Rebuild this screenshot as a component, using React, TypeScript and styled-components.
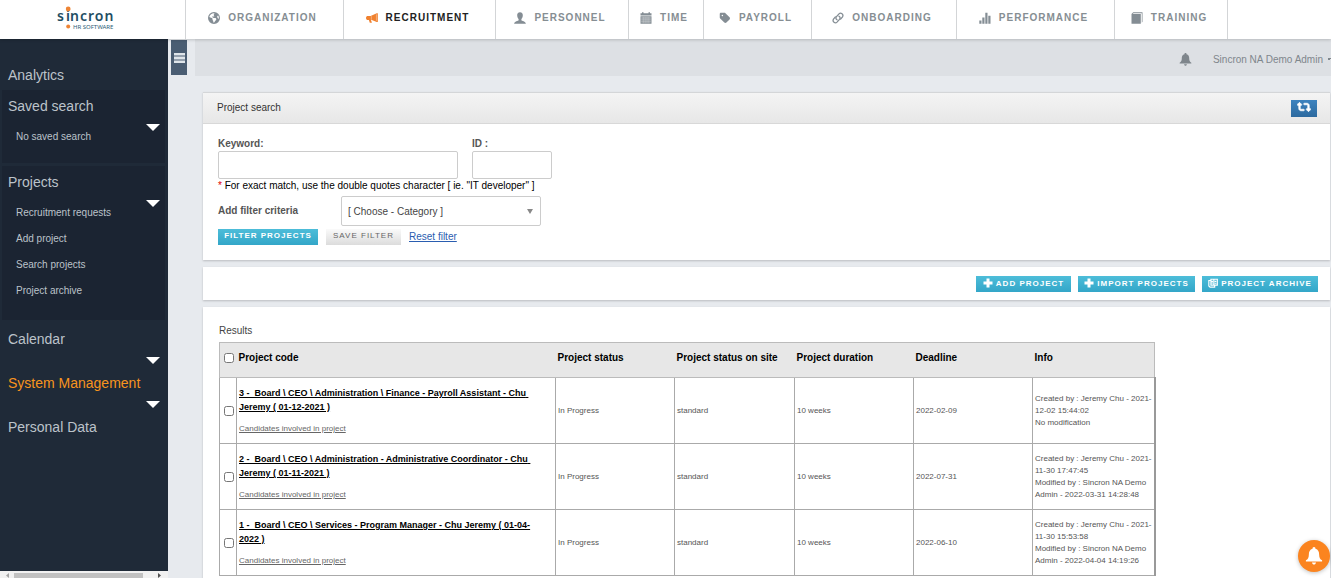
import React from "react";
import styled, { createGlobalStyle } from "styled-components";
import { FaTag, FaRetweet, FaEarthAmericas } from "react-icons/fa6";

const GlobalStyle = createGlobalStyle`
  * { box-sizing: border-box; }
  body {
    margin: 0;
    background: #e7eaee;
    color: #333;
    font: 10px/14px "Liberation Sans", Arial, sans-serif;
  }
  button, input, select { font-family: inherit; margin: 0; }
  p, h1, h2, ul { margin: 0; padding: 0; }
  ul { list-style: none; }
`;

const Shell = styled.div`
  display: flex;
  flex-direction: column;
  height: 100vh;
  overflow: hidden;
`;

const Header = styled.header`
  display: flex;
  flex: none;
  height: 39px;
  background: #fff;
  position: relative;
  box-shadow: 0 1px 3px rgba(0, 0, 0, 0.18);
`;

const Brand = styled.a`
  flex: none;
  width: 185px;
  padding-left: 56px;
  svg { display: block; }
`;

const Nav = styled.nav`
  display: flex;
  border-left: 1px solid #d3d5d7;
`;

const NavLink = styled.a<{ $width: number; $active?: boolean }>`
  display: flex;
  align-items: center;
  justify-content: center;
  gap: 8px;
  width: ${(p) => p.$width}px;
  padding: 0 4px 4px 0;
  border-right: 1px solid #d3d5d7;
  color: ${(p) => (p.$active ? "#222" : "#868e93")};
  font-size: 10px;
  font-weight: bold;
  letter-spacing: 1px;
  text-decoration: none;
  white-space: nowrap;
  svg {
    flex: none;
    width: 12px;
    height: 12px;
    color: ${(p) => (p.$active ? "#f0812f" : "#848d94")};
  }
`;

const Columns = styled.div`
  display: flex;
  flex: 1;
  min-height: 0;
`;

const SideColumn = styled.div`
  display: flex;
  flex-direction: column;
  flex: none;
  width: 168px;
`;

const Sidebar = styled.aside`
  flex: 1;
  padding: 20px 3px 0 2px;
  background: #1f2a38;
  overflow: hidden;
`;

const Section = styled.section<{ $height: number; $filled?: boolean; $gap?: number }>`
  position: relative;
  height: ${(p) => p.$height}px;
  margin-bottom: ${(p) => p.$gap ?? 0}px;
  padding: 4px 6px 0;
  background: ${(p) => (p.$filled ? "#1b2432" : "transparent")};
`;

const SectionTitle = styled.h2<{ $accent?: boolean }>`
  color: ${(p) => (p.$accent ? "#f7941e" : "#bcc3ca")};
  font-size: 14px;
  font-weight: normal;
  line-height: 24px;
`;

const Arrow = styled.span`
  position: absolute;
  right: 5px;
  top: 34px;
  border: 7px solid transparent;
  border-top-color: #fff;
  border-bottom-width: 0;
`;

const SubList = styled.ul`
  padding: 6px 0 0 8px;
`;

const SubLink = styled.a`
  color: #bcc3ca;
  line-height: 26px;
  text-decoration: none;
`;

const ScrollTrack = styled.div`
  display: flex;
  flex: none;
  justify-content: space-between;
  height: 7px;
  padding: 2px 6px 0 5px;
  background: #f1f1f1;
  svg { width: 5px; height: 5px; }
`;

const ScrollThumb = styled.div`
  width: 129px;
  margin: 0 auto 0 4px;
  background: #c1c1c1;
`;

const MenuButton = styled.button`
  display: flex;
  align-items: center;
  justify-content: center;
  flex: none;
  width: 16px;
  height: 35px;
  margin: 1px 8px 0 3px;
  padding: 0;
  border: 0;
  background: #4a5d72;
`;

const Main = styled.main`
  flex: 1;
  min-width: 0;
  overflow: hidden;
`;

const UserBar = styled.div`
  display: flex;
  align-items: center;
  justify-content: flex-end;
  height: 37px;
  padding-top: 4px;
  background: #dde0e4;
  color: #7f868c;
`;

const UserMenu = styled.button`
  display: flex;
  align-items: center;
  gap: 5px;
  margin-left: 21px;
  padding: 0;
  border: 0;
  background: none;
  color: #7f868c;
  font-size: 10px;
`;

const Caret = styled.span`
  width: 3px;
  height: 3px;
  background: linear-gradient(135deg, #7f868c 50%, transparent 50%);
`;

const Content = styled.div`
  display: flex;
  flex-direction: column;
  height: calc(100% - 37px);
  gap: 7px;
  padding: 16px 1px 0 8px;
`;

const Panel = styled.section`
  flex: none;
  background: #fff;
  box-shadow: 0 1px 2px rgba(0, 0, 0, 0.2);
`;

const PanelHead = styled.div`
  display: flex;
  align-items: center;
  justify-content: space-between;
  height: 32px;
  padding: 0 13px 0 14px;
  border-top: 1px solid #d4d6d8;
  border-bottom: 1px solid #d8d8d8;
  background: linear-gradient(#f4f4f4, #e7e7e7);
`;

const PanelTitle = styled.h1`
  font-size: 10px;
  font-weight: normal;
`;

const RefreshButton = styled.button`
  width: 26px;
  height: 17px;
  padding: 0;
  border: 0;
  background: linear-gradient(#3d83bf, #2d6a9f);
  color: #fff;
  svg { display: block; width: 14px; height: 12px; margin: 0 auto 3px; stroke: #fff; stroke-width: 30px; }
`;

const SearchForm = styled.form`
  display: flex;
  flex-direction: column;
  height: 136px;
  padding: 13px 15px 0;
`;

const FieldRow = styled.div`
  display: flex;
  gap: 14px;
`;

const Field = styled.div<{ $width: number }>`
  width: ${(p) => p.$width}px;
`;

const Label = styled.label`
  display: block;
  color: #555;
  font-weight: bold;
`;

const TextInput = styled.input`
  display: block;
  width: 100%;
  height: 28px;
  padding: 0 6px;
  border: 1px solid #ccc;
  border-radius: 2px;
  background: #fff;
`;

const Hint = styled.p`
  height: 17px;
  color: #000;
  font-size: 10px;
  span { color: #e00000; }
`;

const CriteriaRow = styled.div`
  display: grid;
  grid-template-columns: 123px 200px;
  align-items: center;
  height: 30px;
`;

const SelectBox = styled.div`
  display: grid;
  align-items: center;
  select {
    grid-area: 1 / 1;
    width: 100%;
    height: 30px;
    padding: 0 6px;
    appearance: none;
    border: 1px solid #ccc;
    border-radius: 2px;
    background: #fff;
    color: #444;
    font-size: 10px;
  }
  span {
    grid-area: 1 / 1;
    justify-self: end;
    margin-right: 8px;
    border: 3px solid transparent;
    border-top: 5px solid #888;
    border-bottom: 0;
    pointer-events: none;
  }
`;

const ButtonRow = styled.div`
  display: flex;
  align-items: center;
  gap: 8px;
  padding-top: 3px;
  a { color: #2a5db0; }
`;

const Button = styled.button<{ $plain?: boolean; $width: number }>`
  width: ${(p) => p.$width}px;
  height: 16px;
  padding: 0 0 2px;
  border: 0;
  background: ${(p) => (p.$plain ? "linear-gradient(#fafafa, #dcdcdc)" : "linear-gradient(#4dbdd9, #33a6c8)")};
  color: ${(p) => (p.$plain ? "#666" : "#fff")};
  font-size: 8px;
  font-weight: ${(p) => (p.$plain ? "normal" : "bold")};
  line-height: 14px;
  letter-spacing: 1px;
  white-space: nowrap;
`;

const Actions = styled(Panel)`
  display: flex;
  align-items: center;
  justify-content: flex-end;
  gap: 7px;
  height: 33px;
  padding-right: 12px;
`;

const ActionButton = styled.button<{ $width: number }>`
  display: flex;
  align-items: center;
  justify-content: center;
  gap: 3px;
  width: ${(p) => p.$width}px;
  height: 16px;
  padding: 0;
  border: 0;
  background: linear-gradient(#4dbdd9, #33a6c8);
  color: #fff;
  font-size: 8px;
  font-weight: bold;
  letter-spacing: 1px;
  white-space: nowrap;
  svg { flex: none; width: 10px; height: 10px; margin-bottom: 2px; }
`;

const Results = styled(Panel)`
  flex: 1;
  padding: 16px;
`;

const ResultsTitle = styled.h2`
  margin-bottom: 4px;
  color: #444;
  font-size: 10px;
  font-weight: normal;
  line-height: 15px;
`;

const Table = styled.table`
  width: 100%;
  max-width: 935px;
  table-layout: fixed;
  border-collapse: collapse;
  border: 1px solid #bbb;
  color: #555;
  font-size: 8px;
  line-height: 12px;
  input { display: block; width: 10px; height: 10px; margin: 0 0 0 2px; }
`;

const HeadCell = styled.th`
  height: 35px;
  padding: 0 0 4px 2px;
  border-bottom: 1px solid #bbb;
  background: #e7e7e7;
  color: #000;
  font-size: 10px;
  text-align: left;
  white-space: nowrap;
`;

const Cell = styled.td`
  height: 66px;
  padding: 0 0 0 2px;
  border: 1px solid #aaa;
  &:last-child { border-right: 2px solid #999; }
`;

const CodeCell = styled(Cell)`
  padding: 8px 5px 7px 2px;
  vertical-align: top;
`;

const ProjectLink = styled.a`
  display: block;
  margin-bottom: 8px;
  color: #000;
  font-size: 9px;
  font-weight: bold;
  line-height: 14px;
  white-space: pre-wrap;
`;

const CandidateLink = styled.a`
  display: block;
  color: #666;
  line-height: 14px;
`;

const Bubble = styled.button`
  position: fixed;
  right: 1px;
  bottom: 6px;
  display: grid;
  place-items: center;
  width: 32px;
  height: 32px;
  padding: 0;
  border: 0;
  border-radius: 50%;
  background: #fb841f;
  color: #fff;
  box-shadow: 0 1px 4px rgba(0, 0, 0, 0.25);
`;

const Logo = () => (
  <svg width="60" height="32" viewBox="0 0 60 32" role="img" aria-label="Sincron HR Software">
    <text y="21" fontFamily="Noto Sans, sans-serif" fontSize="14" fontWeight="600" letterSpacing="1" fill="#1e4d63">
      <tspan x="1">s</tspan>
      <tspan x="10">i</tspan>
      <tspan x="14">ncron</tspan>
    </text>
    <text x="17" y="29" fontFamily="Noto Sans, sans-serif" fontSize="6" fill="#2c6078">HR SOFTWARE</text>
    <circle cx="12.2" cy="9" r="2.4" fill="#ee8434" />
    <circle cx="12.2" cy="26.500" r="2" fill="#ee8434" />
  </svg>
);

const Horn = () => (
  <svg viewBox="0 0 13 12" fill="currentColor">
    <path d="M12.800.8v9.400h-1.200L6.300 8.200l-.9-.1 1 3H4.100l-1-3H1.200L.1 7V5l1.100-1.300H5L11.600.8z" />
    <path d="M11.300 2v7M5.800 4v4" stroke="#fff" strokeWidth=".4" />
  </svg>
);
const Person = () => (
  <svg viewBox="0 0 12 12" fill="currentColor">
    <path d="M6 .3c2 0 3 1.300 2.800 3.400C8.700 5.200 8 6.300 7.400 6.900v1.300c.2.500 4.300 1.200 4.500 3.500H.1C.3 9.400 4.400 8.700 4.600 8.200V6.900C4 6.300 3.300 5.200 3.200 3.700 3 1.600 4 .3 6 .3z" />
  </svg>
);
const Calendar = () => (
  <svg viewBox="0 0 12 12" fill="currentColor">
    <path d="M.5 1.200H2V.3h1.500v.9h5V.3H10v.9h1.500v2.300H.5zM.5 4.200h11v7.500H.5z" />
    <path d="M1 6h10M1 7.900h10M1 9.800h10M3.200 4.800v6.400M5.100 4.800v6.400M7 4.800v6.400M8.900 4.800v6.400" stroke="#fff" strokeWidth=".35" />
  </svg>
);
const Chain = () => (
  <svg viewBox="0 0 12 12" fill="none" stroke="currentColor" strokeWidth="1.300" strokeLinecap="round">
    <path d="M5 7.800C3.700 7 3.600 5.700 4.500 4.600L7 1.900c1.800-1.800 5 .4 3.500 2.900L8.600 7.100" />
    <path d="M7 4.200c1.300.8 1.400 2.100.5 3.200L5 10.100C3.200 11.900 0 9.700 1.500 7.200l1.900-2.300" />
  </svg>
);
const Bars = () => (
  <svg viewBox="0 0 12 12" fill="currentColor">
    <path d="M.3 8.500h2.200v3.200H.3zM3.300 5.500h2.200v6.200H3.300zM6.300.8h2.200v10.900H6.300zM9.300 3.800h2.200v7.900H9.300z" />
  </svg>
);
const Book = () => (
  <svg viewBox="0 0 12 12" fill="currentColor">
    <path d="M.5 2 2.200.3H11.500v9.500l-.7.900V1.200H2.500l-.8.900h8.100v9.600H.5z" />
  </svg>
);
const Bell = ({ size }: { size: number }) => (
  <svg width={size} height={size} viewBox="0 0 14 14" fill="currentColor">
    <path d="M7 0c.8 0 1.200.6 1.100 1.300C10.300 1.900 11 3.700 11 5.800c0 2.400.7 3.600 2.300 4.600v.9H.7v-.9C2.300 9.400 3 8.200 3 5.800c0-2.100.7-3.900 2.900-4.500C5.800.6 6.200 0 7 0zM5.400 12h3.200c-.2 1-.8 1.600-1.600 1.600S5.600 13 5.400 12z" />
  </svg>
);
const Plus = () => (
  <svg viewBox="0 0 10 10" fill="currentColor">
    <path d="M3.500.5h3v3h3v3h-3v3h-3v-3h-3v-3h3z" />
  </svg>
);
const Archive = () => (
  <svg viewBox="0 0 12 12" fill="none" stroke="currentColor" strokeWidth="1.400">
    <path d="M3.500 1.500h7.700v7H3.500zM3 3H1v6.500l1.500 1.500H8V9M7 1.500v7M4 4h2M4 6h2M8 4h2M8 6.300h2" />
  </svg>
);

const navItems = [
  { label: "ORGANIZATION", icon: <FaEarthAmericas />, width: 158 },
  { label: "RECRUITMENT", icon: <Horn />, width: 152, active: true },
  { label: "PERSONNEL", icon: <Person />, width: 133 },
  { label: "TIME", icon: <Calendar />, width: 75 },
  { label: "PAYROLL", icon: <FaTag />, width: 108 },
  { label: "ONBOARDING", icon: <Chain />, width: 145 },
  { label: "PERFORMANCE", icon: <Bars />, width: 158 },
  { label: "TRAINING", icon: <Book />, width: 113 },
];

const projectLinks = ["Recruitment requests", "Add project", "Search projects", "Project archive"];

const headings = ["Project code", "Project status", "Project status on site", "Project duration", "Deadline", "Info"];

const projects = [
  {
    code: "3 -  Board \\ CEO \\ Administration \\ Finance - Payroll Assistant - Chu Jeremy ( 01-12-2021 )",
    deadline: "2022-02-09",
    info: ["Created by : Jeremy Chu - 2021-12-02 15:44:02", "No modification"],
  },
  {
    code: "2 -  Board \\ CEO \\ Administration - Administrative Coordinator - Chu Jeremy ( 01-11-2021 )",
    deadline: "2022-07-31",
    info: ["Created by : Jeremy Chu - 2021-11-30 17:47:45", "Modified by : Sincron NA Demo Admin - 2022-03-31 14:28:48"],
  },
  {
    code: "1 -  Board \\ CEO \\ Services - Program Manager - Chu Jeremy ( 01-04-2022 )",
    deadline: "2022-06-10",
    info: ["Created by : Jeremy Chu - 2021-11-30 15:53:58", "Modified by : Sincron NA Demo Admin - 2022-04-04 14:19:26"],
  },
];

export default function App() {
  return (
    <Shell>
      <GlobalStyle />
      <Header>
        <Brand href="#"><Logo /></Brand>
        <Nav>
          {navItems.map((item) => (
            <NavLink key={item.label} href="#" $width={item.width} $active={item.active}>
              {item.icon}
              {item.label}
            </NavLink>
          ))}
        </Nav>
      </Header>
      <Columns>
        <SideColumn>
          <Sidebar>
            <Section $height={31}><SectionTitle>Analytics</SectionTitle></Section>
            <Section $height={73} $gap={3} $filled>
              <SectionTitle>Saved search</SectionTitle>
              <Arrow />
              <SubList><li><SubLink href="#">No saved search</SubLink></li></SubList>
            </Section>
            <Section $height={154} $gap={3} $filled>
              <SectionTitle>Projects</SectionTitle>
              <Arrow />
              <SubList>
                {projectLinks.map((link) => (
                  <li key={link}><SubLink href="#">{link}</SubLink></li>
                ))}
              </SubList>
            </Section>
            <Section $height={44}><SectionTitle>Calendar</SectionTitle><Arrow /></Section>
            <Section $height={44}><SectionTitle $accent>System Management</SectionTitle><Arrow /></Section>
            <Section $height={44}><SectionTitle>Personal Data</SectionTitle></Section>
          </Sidebar>
          <ScrollTrack>
            <svg viewBox="0 0 5 5"><path d="M4 0v5L1 2.500z" fill="#a3a3a3" /></svg>
            <ScrollThumb />
            <svg viewBox="0 0 5 5"><path d="M1 0v5l3-2.500z" fill="#505050" /></svg>
          </ScrollTrack>
        </SideColumn>
        <MenuButton aria-label="Toggle menu">
          <svg width="11" height="10" viewBox="0 0 11 10"><path d="M0 1h11M0 5h11M0 9h11" stroke="#dfe5ea" strokeWidth="3" /></svg>
        </MenuButton>
        <Main>
          <UserBar>
            <Bell size={13} />
            <UserMenu>Sincron NA Demo Admin<Caret /></UserMenu>
          </UserBar>
          <Content>
            <Panel>
              <PanelHead>
                <PanelTitle>Project search</PanelTitle>
                <RefreshButton aria-label="Refresh"><FaRetweet /></RefreshButton>
              </PanelHead>
              <SearchForm>
                <FieldRow>
                  <Field $width={240}>
                    <Label htmlFor="keyword">Keyword:</Label>
                    <TextInput id="keyword" />
                  </Field>
                  <Field $width={80}>
                    <Label htmlFor="project-id">ID :</Label>
                    <TextInput id="project-id" />
                  </Field>
                </FieldRow>
                <Hint><span>*</span> For exact match, use the double quotes character [ ie. "IT developer" ]</Hint>
                <CriteriaRow>
                  <Label htmlFor="criteria">Add filter criteria</Label>
                  <SelectBox>
                    <select id="criteria"><option>[ Choose - Category ]</option></select>
                    <span />
                  </SelectBox>
                </CriteriaRow>
                <ButtonRow>
                  <Button type="button" $width={100}>FILTER PROJECTS</Button>
                  <Button type="button" $width={75} $plain>SAVE FILTER</Button>
                  <a href="#">Reset filter</a>
                </ButtonRow>
              </SearchForm>
            </Panel>
            <Actions>
              <ActionButton $width={95}><Plus />ADD PROJECT</ActionButton>
              <ActionButton $width={117}><Plus />IMPORT PROJECTS</ActionButton>
              <ActionButton $width={116}><Archive />PROJECT ARCHIVE</ActionButton>
            </Actions>
            <Results>
              <ResultsTitle>Results</ResultsTitle>
              <Table>
                <colgroup>
                  <col width="17" /><col width="319" /><col width="119" /><col width="120" />
                  <col width="119" /><col width="119" /><col width="122" />
                </colgroup>
                <thead>
                  <tr>
                    <HeadCell><input type="checkbox" aria-label="Select all projects" /></HeadCell>
                    {headings.map((h) => <HeadCell key={h}>{h}</HeadCell>)}
                  </tr>
                </thead>
                <tbody>
                  {projects.map((p) => (
                    <tr key={p.code}>
                      <Cell><input type="checkbox" aria-label={p.code} /></Cell>
                      <CodeCell>
                        <ProjectLink href="#">{p.code}</ProjectLink>
                        <CandidateLink href="#">Candidates involved in project</CandidateLink>
                      </CodeCell>
                      <Cell>In Progress</Cell>
                      <Cell>standard</Cell>
                      <Cell>10 weeks</Cell>
                      <Cell>{p.deadline}</Cell>
                      <Cell>{p.info.map((line) => <p key={line}>{line}</p>)}</Cell>
                    </tr>
                  ))}
                </tbody>
              </Table>
            </Results>
          </Content>
        </Main>
      </Columns>
      <Bubble aria-label="Notifications"><Bell size={18} /></Bubble>
    </Shell>
  );
}
